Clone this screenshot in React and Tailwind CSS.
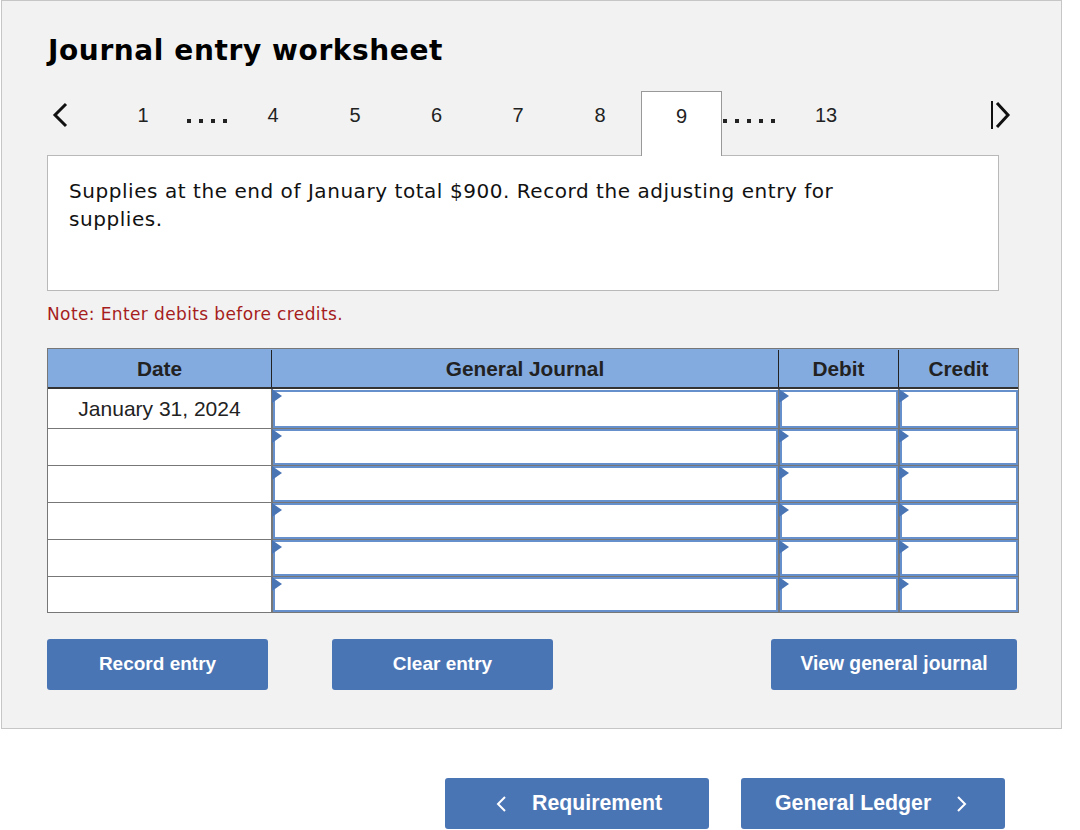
const dejavu = "font-['DejaVu_Sans',Verdana,sans-serif]";
const arial = "font-['Liberation_Sans',Arial,sans-serif]";

const rows = [
    { date: "January 31, 2024", h: "h-10", pad: "pt-px" },
    { date: "", h: "h-[37px]", pad: "" },
    { date: "", h: "h-[37px]", pad: "" },
    { date: "", h: "h-[37px]", pad: "" },
    { date: "", h: "h-[37px]", pad: "" },
    { date: "", h: "h-9", pad: "" },
];

function Num({ n, className = "w-[82px]" }) {
    return <div className={`${className} h-12 flex items-center justify-center text-[20px] text-[#222]`}>{n}</div>;
}

function Dots({ count, className }) {
    return (
        <div className={`flex items-center gap-2 pt-[12px] ${className}`}>
            {Array.from({ length: count }).map((_, i) => (
                <span key={i} className="w-1 h-1 bg-[#222]" />
            ))}
        </div>
    );
}

function InputCell({ pad }) {
    return (
        <div className={`relative border-l-2 border-[#777] h-full min-w-0 bg-white ${pad}`}>
            <div className="h-full bg-white border-2 border-[#6690cc]" />
            <svg className="absolute -left-px top-0" width="11" height="14" viewBox="0 0 11 14">
                <path d="M0 0 L10 7 L0 14 Z" fill="#4a75b5" />
            </svg>
        </div>
    );
}

function Btn({ children, className = "" }) {
    return (
        <button className={`h-[51px] rounded-[3px] bg-[#4a75b5] text-white font-bold ${arial} ${className}`}>
            {children}
        </button>
    );
}

export default function App() {
    return (
        <div className={`w-[1080px] h-[830px] bg-white overflow-hidden ${arial}`}>
            <div className="ml-px w-[1061px] h-[729px] bg-[#f2f2f2] border border-[#c6c6c6] pl-[45px] pr-[41px]">
                <h1 className={`${dejavu} font-bold text-[28px] tracking-[0.6px] leading-8 text-black pl-px pt-[34px] h-[64px] box-content`}>
                    Journal entry worksheet
                </h1>

                <div className="flex items-start h-[64px] relative -mt-[8px]">
                    <div className="w-[55px] h-12 flex items-center pl-[4px]">
                        <svg width="18" height="28" viewBox="0 0 18 28" fill="none" stroke="#111" strokeWidth="3">
                            <path d="M15 3 L4 14 L15 25" />
                        </svg>
                    </div>
                    <Num n="1" />
                    <Dots count={4} className="w-[48px] h-12 pl-[3px]" />
                    <Num n="4" />
                    <Num n="5" />
                    <Num n="6" className="w-[81px]" />
                    <Num n="7" />
                    <Num n="8" />
                    <div className="w-[81px] h-[65px] bg-white border border-b-0 border-[#999] flex items-start justify-center pt-[10px] text-[20px] leading-7 text-[#222] relative z-10">
                        9
                    </div>
                    <Dots count={5} className="w-[63px] h-12 pl-[1px]" />
                    <Num n="13" />
                    <div className="ml-[122px] h-12 flex items-center">
                        <svg width="26" height="30" viewBox="0 0 26 30" fill="none" stroke="#111">
                            <path d="M3 1 V29" strokeWidth="2" />
                            <path d="M8 3 L19 15 L8 27" strokeWidth="3" />
                        </svg>
                    </div>
                </div>

                <div className="w-[952px] h-[136px] bg-white border border-[#b9b9b9] px-[21px] pt-[21px]">
                    <p className={`${dejavu} text-[20px] tracking-[0.55px] leading-[28px] text-[#111] w-[800px]`}>
                        Supplies at the end of January total $900. Record the adjusting entry for supplies.
                    </p>
                </div>

                <p className={`${dejavu} text-[17px] tracking-[0.38px] leading-6 text-[#a61d1d] mt-[11px]`}>
                    Note: Enter debits before credits.
                </p>

                <div className="w-[972px] mt-[22px] border border-[#777] border-b-0 bg-white">
                    <div className="grid grid-cols-[223px_507px_120px_1fr] h-[40px] pt-px bg-[#84abe0] border-b-2 border-[#333] text-[20.8px] font-bold text-[#222]">
                        <div className="flex items-center justify-center">Date</div>
                        <div className="flex items-center justify-center border-l border-[#222]">General Journal</div>
                        <div className="flex items-center justify-center border-l border-[#222]">Debit</div>
                        <div className="flex items-center justify-center border-l border-[#222]">Credit</div>
                    </div>
                    {rows.map((r, i) => (
                        <div key={i} className={`grid grid-cols-[223px_507px_120px_1fr] ${r.h} border-b border-[#777]`}>
                            <div className="flex items-center justify-center text-[21px] text-[#222]">{r.date}</div>
                            <InputCell pad={r.pad} />
                            <InputCell pad={r.pad} />
                            <InputCell pad={r.pad} />
                        </div>
                    ))}
                </div>

                <div className="flex mt-[26px] w-[970px]">
                    <Btn className="w-[221px] text-[19px]">Record entry</Btn>
                    <Btn className="w-[221px] ml-[64px] text-[19px]">Clear entry</Btn>
                    <Btn className="w-[246px] ml-auto text-[19.3px]">View general journal</Btn>
                </div>
            </div>

            <div className="flex ml-[445px] mt-[49px]">
                <Btn className="w-[264px] pl-[49px] text-[21.3px] flex items-center">
                    <svg width="14" height="18" viewBox="0 0 14 18" fill="none" stroke="#fff" strokeWidth="2" className="mr-[24px]">
                        <path d="M11 2 L4 9 L11 16" />
                    </svg>
                    Requirement
                </Btn>
                <Btn className="w-[264px] ml-[32px] pl-[34px] text-[21.3px] flex items-center">
                    General Ledger
                    <svg width="14" height="18" viewBox="0 0 14 18" fill="none" stroke="#fff" strokeWidth="2" className="ml-[23px]">
                        <path d="M4 2 L11 9 L4 16" />
                    </svg>
                </Btn>
            </div>
        </div>
    );
}
